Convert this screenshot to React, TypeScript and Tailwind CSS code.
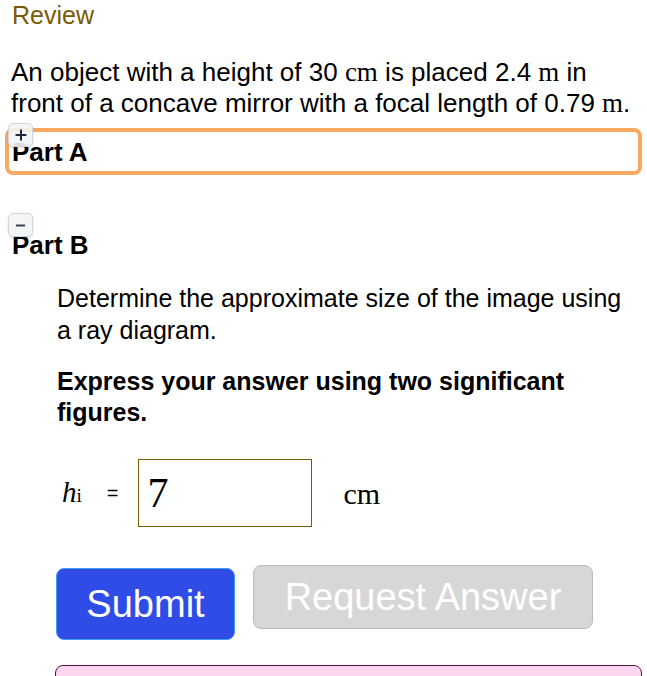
import { Minus, Plus } from 'lucide-react'

function Unit({ children }: { children: string }) {
  return <span className="font-['Liberation_Serif',serif] text-[27px]">{children}</span>
}

function ToggleBox({ open, top }: { open: boolean; top: string }) {
  return (
    <span
      className={`absolute left-[8px] ${top} flex h-[24px] w-[25px] items-center justify-center rounded-[5px] border border-gray-300 bg-gray-100/90 shadow-sm`}
    >
      {open ? (
        <Minus size={13} strokeWidth={3.5} className="text-gray-700" />
      ) : (
        <Plus size={16} strokeWidth={3} className="text-gray-800" />
      )}
    </span>
  )
}

export default function App() {
  return (
    <div className="min-h-screen overflow-hidden bg-white font-['Liberation_Sans',Arial,sans-serif] text-[26px] text-black">
      <div className="px-[12px] pt-[1px] text-[25px] leading-[28px] text-[#7a5a05]">Review</div>

      <p className="mt-[28px] px-[11px] leading-[31px]">
        An object with a height of 30 <Unit>cm</Unit> is placed 2.4 <Unit>m</Unit> in front of a concave mirror with a
        focal length of 0.79 <Unit>m</Unit>.
      </p>

      {/* collapsed part */}
      <div className="relative mx-[5px] mt-[9px] h-[47px] rounded-[8px] border-[4px] border-[#f9a860]">
        <div className="pl-[3px] pt-[5px] text-[26px] font-bold leading-[30px]">Part A</div>
      </div>

      {/* expanded part */}
      <div className="relative mx-[5px] mt-[44px]">
        <div className="pl-[7px] pt-[11px] text-[26px] font-bold leading-[30px]">Part B</div>

        <div className="pl-[52px]">
          <p className="mt-[22px] text-[25px] leading-[32px]">
            Determine the approximate size of the image using a ray diagram.
          </p>
          <p className="mt-[20px] text-[25px] font-bold leading-[31px]">
            Express your answer using two significant figures.
          </p>

          <div className="mt-[31px] flex items-center">
            <span className="ml-[5px] font-['Liberation_Serif',serif] text-[29px] italic">
              h<span className="text-[19px] not-italic">i</span>
            </span>
            <span className="ml-[25px] text-[20px]">=</span>
            <div className="ml-[20px] flex h-[68px] w-[174px] items-center border-[1.5px] border-[#7a5a05] pl-[8px] font-['Liberation_Serif',serif] text-[42px]">
              7
            </div>
            <span className="ml-[31px] font-['Liberation_Serif',serif] text-[30px]">cm</span>
          </div>

          <div className="mt-[38px] flex items-start gap-[18px]">
            <button className="-ml-[1px] mt-[3px] h-[72px] w-[179px] rounded-[8px] border border-[#3aa0f0] bg-[#2f4de6] text-[38px] text-white">
              Submit
            </button>
            <button className="h-[64px] w-[340px] rounded-[8px] border border-[#bdbdbd] bg-[#d7d7d7] text-[38px] text-white">
              Request Answer
            </button>
          </div>

          <div className="-ml-[2px] mt-[25px] h-[40px] rounded-[8px] border-[1.5px] border-[#5a1446] bg-[#fcd6f0]" />
        </div>
      </div>

      {/* toggle icons sit over the part headings */}
      <div className="pointer-events-none absolute inset-0">
        <ToggleBox open={false} top="top-[123px]" />
        <ToggleBox open={true} top="top-[213px]" />
      </div>
    </div>
  )
}
